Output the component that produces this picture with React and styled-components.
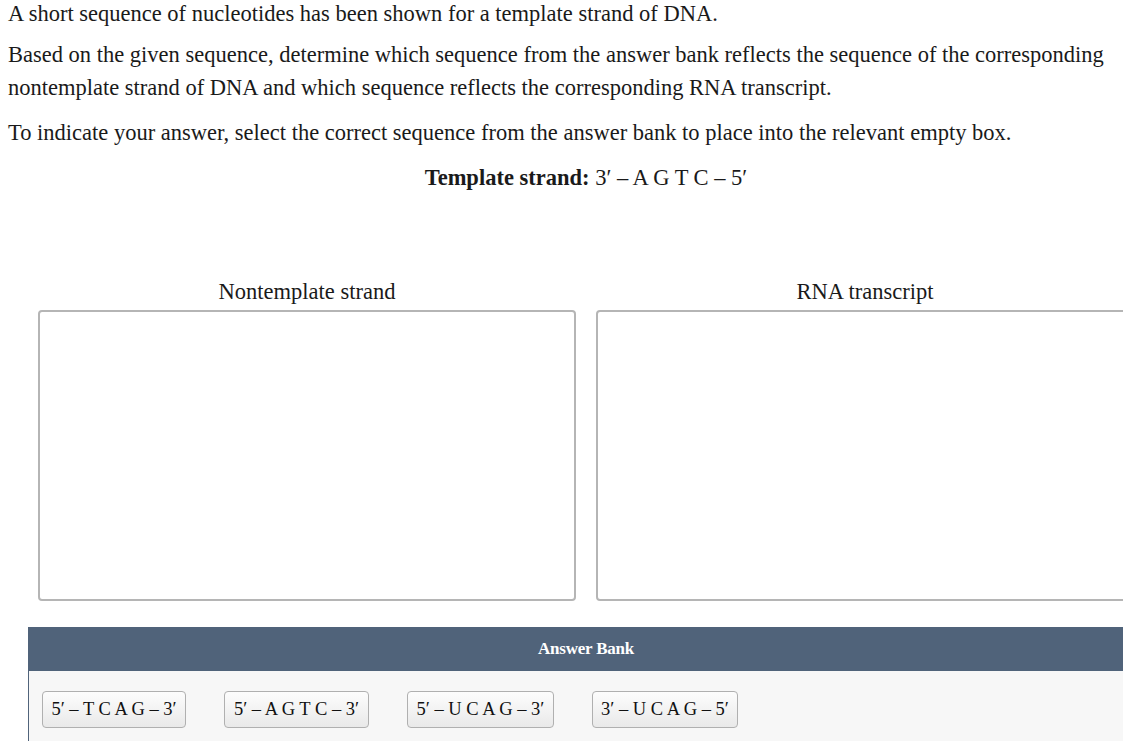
import React from "react";
import styled, { createGlobalStyle } from "styled-components";

const Global = createGlobalStyle`
  body {
    margin: 0;
    padding: 0 8px;
    font-family: "Liberation Serif", "Times New Roman", serif;
    color: #1a1a1a;
    background: #fff;
    overflow: hidden;
  }
`;

const Page = styled.div`
  width: 1107px;
`;

const Para = styled.p`
  margin: 0 0 ${(p) => p.$gap}px;
  font-size: 22.5px;
  line-height: ${(p) => p.$lh || 33}px;
`;

const Template = styled.div`
  width: 1116px;
  margin-left: 20px;
  text-align: center;
  font-size: 22.5px;
  line-height: 33px;
  b {
    font-weight: bold;
  }
`;

const Columns = styled.div`
  width: 1116px;
  box-sizing: border-box;
  margin: 86px 0 0 20px;
  display: flex;
  gap: 20px;
  padding: 0 10px;
`;

const Column = styled.div`
  flex: 0 0 538px;
  display: flex;
  flex-direction: column;
  align-items: center;
`;

const Label = styled.div`
  font-size: 22.5px;
  line-height: 24px;
  margin-bottom: 6px;
`;

const DropBox = styled.div`
  width: 100%;
  height: 291px;
  box-sizing: border-box;
  border: 2px solid #b5b5b5;
  border-radius: 4px;
  background: #fff;
`;

const Bank = styled.div`
  width: 1116px;
  margin: 26px 0 0 20px;
`;

const BankHead = styled.div`
  height: 44px;
  background: #50637a;
  color: #fff;
  font-size: 17px;
  font-weight: bold;
  display: flex;
  align-items: center;
  justify-content: center;
  letter-spacing: -0.2px;
`;

const BankBody = styled.div`
  background: #f7f7f7;
  border-left: 1px solid #50637a;
  padding: 20px 13px 20px;
  display: flex;
  gap: 38px;
`;

const Chip = styled.button`
  width: ${(p) => p.$w}px;
  height: 37px;
  box-sizing: border-box;
  border: 1px solid #b0b0b0;
  border-radius: 4px;
  background: linear-gradient(#fdfdfd, #e9e9e9);
  font-family: "Liberation Serif", "Times New Roman", serif;
  font-size: 18.5px;
  color: #111;
  padding: 0;
  display: flex;
  align-items: center;
  justify-content: center;
  white-space: pre;
`;

const answers = [
  { text: "5′ – T C A G – 3′", w: 144 },
  { text: "5′ – A G T C – 3′", w: 145 },
  { text: "5′ – U C A G – 3′", w: 147 },
  { text: "3′ – U C A G – 5′", w: 146 },
];

export default function App() {
  return (
    <Page>
      <Global />
      <Para $lh={28} $gap={10}>
        A short sequence of nucleotides has been shown for a template strand of DNA.
      </Para>
      <Para $gap={12}>
        Based on the given sequence, determine which sequence from the answer bank reflects the sequence of the corresponding
        nontemplate strand of DNA and which sequence reflects the corresponding RNA transcript.
      </Para>
      <Para $gap={12}>
        To indicate your answer, select the correct sequence from the answer bank to place into the relevant empty box.
      </Para>
      <Template>
        <b>Template strand:</b> 3′ – A G T C – 5′
      </Template>
      <Columns>
        <Column>
          <Label>Nontemplate strand</Label>
          <DropBox />
        </Column>
        <Column>
          <Label>RNA transcript</Label>
          <DropBox />
        </Column>
      </Columns>
      <Bank>
        <BankHead>Answer Bank</BankHead>
        <BankBody>
          {answers.map((a) => (
            <Chip key={a.text} $w={a.w}>
              {a.text}
            </Chip>
          ))}
        </BankBody>
      </Bank>
    </Page>
  );
}
